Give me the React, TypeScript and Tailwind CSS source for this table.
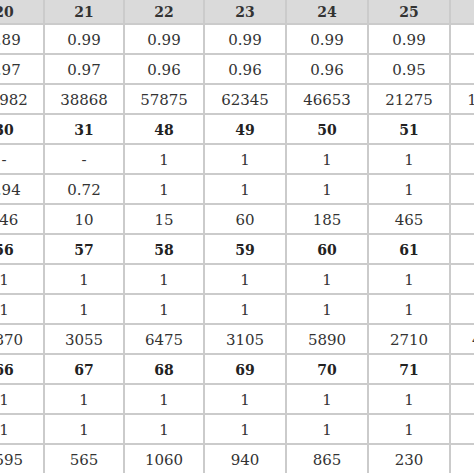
import React from 'react';

const header = ['20', '21', '22', '23', '24', '25', '26'];

// bold rows hold the sample ids
const rows: { bold?: boolean; cells: string[] }[] = [
  { cells: ['0.89', '0.99', '0.99', '0.99', '0.99', '0.99', '0.99'] },
  { cells: ['0.97', '0.97', '0.96', '0.96', '0.96', '0.95', '0.95'] },
  { cells: ['31982', '38868', '57875', '62345', '46653', '21275', '15460'] },
  { bold: true, cells: ['30', '31', '48', '49', '50', '51', '52'] },
  { cells: ['-', '-', '1', '1', '1', '1', '1'] },
  { cells: ['0.94', '0.72', '1', '1', '1', '1', '1'] },
  { cells: ['146', '10', '15', '60', '185', '465', '380'] },
  { bold: true, cells: ['56', '57', '58', '59', '60', '61', '62'] },
  { cells: ['1', '1', '1', '1', '1', '1', '1'] },
  { cells: ['1', '1', '1', '1', '1', '1', '1'] },
  { cells: ['1870', '3055', '6475', '3105', '5890', '2710', '4210'] },
  { bold: true, cells: ['66', '67', '68', '69', '70', '71', '72'] },
  { cells: ['1', '1', '1', '1', '1', '1', '1'] },
  { cells: ['1', '1', '1', '1', '1', '1', '1'] },
  { cells: ['1595', '565', '1060', '940', '865', '230', '185'] },
];

const font = { fontFamily: '"DejaVu Serif", "Liberation Serif", serif' };

export default function App() {
  return (
    <div className="w-[474px] h-[474px] overflow-hidden bg-white">
      <div
        className="ml-[-35px] w-max grid grid-cols-[78px_78px_78px_80px_80px_80px_80px] gap-[2px] bg-[#cbcbcb] text-[#333333]"
        style={font}
      >
        {header.map((h, i) => (
          <div key={'h' + i} className="h-[23px] bg-[#dadada] flex items-center justify-center text-[14px] font-bold pt-[1px]">
            {h}
          </div>
        ))}
        {rows.map((r, ri) =>
          r.cells.map((c, ci) => (
            <div
              key={ri + '-' + ci}
              className={
                'h-[28px] bg-white flex items-center justify-center pt-[3px] ' +
                (r.bold ? 'font-bold text-[14px] text-[#222222]' : 'font-normal text-[15px]')
              }
            >
              {c}
            </div>
          ))
        )}
      </div>
    </div>
  );
}
